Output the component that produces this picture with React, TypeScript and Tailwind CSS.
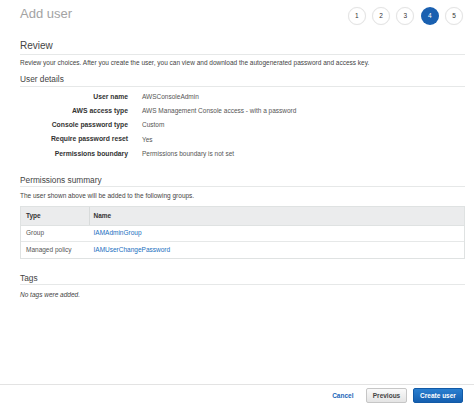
import React from 'react';

const details: [string, string][] = [
  ['User name', 'AWSConsoleAdmin'],
  ['AWS access type', 'AWS Management Console access - with a password'],
  ['Console password type', 'Custom'],
  ['Require password reset', 'Yes'],
  ['Permissions boundary', 'Permissions boundary is not set'],
];

const groups: [string, string][] = [
  ['Group', 'IAMAdminGroup'],
  ['Managed policy', 'IAMUserChangePassword'],
];

const SectionTitle: React.FC<{ title: string; big?: boolean }> = ({ title, big }) => (
  <div
    className={`border-b border-[#e6e8e8] ${
      big ? 'text-[10px] leading-[12px] pb-[2px] text-[#444]' : 'text-[8.3px] leading-[10px] pb-[1.5px] text-[#444]'
    }`}
  >
    {title}
  </div>
);

export default function App() {
  return (
    <div className="w-[474px] h-[406px] bg-white flex flex-col font-['Liberation_Sans',Arial,sans-serif] text-[#444]">
      <div className="flex-1 pl-[20px] pr-[9px]">
        {/* Header */}
        <div className="flex items-start justify-between">
          <h1 className="mt-[6px] text-[13px] leading-[15px] text-[#a3a3a3]">Add user</h1>
          <div className="mt-[7px] mr-[2px] flex gap-[6.3px]">
            {[1, 2, 3, 4, 5].map((n) => (
              <div
                key={n}
                className={`w-[18px] h-[18px] rounded-full flex items-center justify-center text-[6.5px] ${
                  n === 4
                    ? 'bg-[#1a60b0] text-white'
                    : 'bg-white border border-[#e4e4e4] text-[#333] shadow-[0_0_1px_rgba(0,0,0,0.08)]'
                }`}
              >
                {n}
              </div>
            ))}
          </div>
        </div>

        {/* Review */}
        <div className="mt-[14.5px]">
          <SectionTitle title="Review" big />
        </div>
        <p className="mt-[4px] text-[6.5px] leading-[8px] text-[#444]">
          Review your choices. After you create the user, you can view and download the autogenerated password and access key.
        </p>

        {/* User details */}
        <div className="mt-[7.5px]">
          <SectionTitle title="User details" />
        </div>
        <div className="mt-[3px]">
          {details.map(([label, value]) => (
            <div key={label} className="flex items-center h-[14.25px]">
              <div className="w-[108px] text-right text-[6.8px] font-bold text-[#333]">{label}</div>
              <div className="ml-[14px] text-[6.5px] text-[#555]">{value}</div>
            </div>
          ))}
        </div>

        {/* Permissions summary */}
        <div className="mt-[14px]">
          <SectionTitle title="Permissions summary" />
        </div>
        <p className="mt-[5px] text-[6.5px] leading-[8px] text-[#444]">
          The user shown above will be added to the following groups.
        </p>
        <div className="mt-[5.5px] border border-[#dfe2e2] text-[6.5px]">
          <div className="flex h-[19px] bg-[#ebeced] border-b border-[#dfe2e2] font-bold text-[#333]">
            <div className="w-[69px] pl-[5px] flex items-center border-r border-[#d8dbdb]">Type</div>
            <div className="pl-[3.5px] flex items-center">Name</div>
          </div>
          {groups.map(([type, name], i) => (
            <div
              key={name}
              className={`flex h-[16px] items-center ${i === 0 ? 'border-b border-[#e6e8e8]' : ''}`}
            >
              <div className="w-[69px] pl-[5px] text-[#555]">{type}</div>
              <div className="pl-[3.5px] text-[#1a6fc0]">{name}</div>
            </div>
          ))}
        </div>

        {/* Tags */}
        <div className="mt-[14px]">
          <SectionTitle title="Tags" />
        </div>
        <p className="mt-[6px] text-[6.5px] leading-[8px] italic text-[#444]">No tags were added.</p>
      </div>

      {/* Footer */}
      <div className="h-[22px] border-t border-[#e3e3e3] flex items-center justify-end pr-[11px]">
        <button className="text-[6.5px] font-bold text-[#1a66b8] mr-[12.5px]">Cancel</button>
        <button className="w-[41px] h-[15px] rounded-[2px] border border-[#c6c6c6] bg-gradient-to-b from-[#fafafa] to-[#e4e4e4] text-[6.5px] font-bold text-[#444] mr-[6px]">
          Previous
        </button>
        <button className="w-[50px] h-[15px] rounded-[2px] border border-[#125aa6] bg-gradient-to-b from-[#2a7fd0] to-[#145fb0] text-[6.5px] font-bold text-white">
          Create user
        </button>
      </div>
    </div>
  );
}
